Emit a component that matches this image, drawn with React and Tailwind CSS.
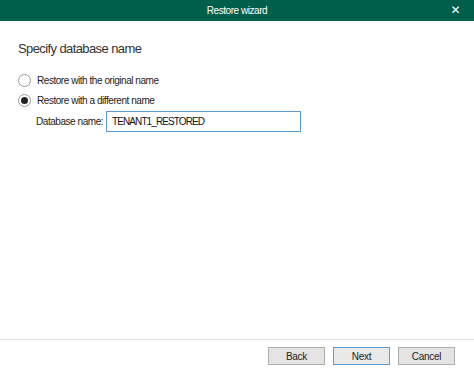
import React from "react";

const font = { fontFamily: '"Liberation Sans", Arial, sans-serif' };

function Radio({ checked, label }) {
  return (
    <label className="flex h-[20px] items-center gap-[6px] whitespace-nowrap text-[10px] tracking-[-0.45px] text-[#222]">
      <span className="flex h-[13px] w-[13px] items-center justify-center rounded-full border border-[#9a9a9a] bg-white">
        {checked ? <span className="h-[7px] w-[7px] rounded-full bg-[#222]" /> : null}
      </span>
      {label}
    </label>
  );
}

function Button({ children, focused }) {
  return (
    <button
      className={
        focused
          ? "h-[18px] w-[57px] border border-[#5b9bd5] bg-[#e9e9e9] text-[10px] tracking-[-0.3px] text-[#222]"
          : "h-[18px] w-[57px] border border-[#adadad] bg-[#e4e4e4] text-[10px] tracking-[-0.3px] text-[#222]"
      }
    >
      {children}
    </button>
  );
}

export default function App() {
  return (
    <div className="flex h-[372px] w-[474px] flex-col bg-white" style={font}>
      <div className="relative flex h-[21px] items-center justify-center bg-[#005f4b] text-[10px] tracking-[-0.45px] text-white">
        Restore wizard
        <span className="absolute right-[14px] top-[2px] text-[12px] font-bold leading-[16px]" style={{ fontFamily: '"DejaVu Sans", sans-serif' }}>✕</span>
      </div>

      <div className="flex-1 px-[18px]">
        <div className="mt-[18px] text-[13px] tracking-[-0.6px] text-[#333]">Specify database name</div>
        <div className="mt-[12px] flex flex-col">
          <Radio label="Restore with the original name" />
          <Radio checked label="Restore with a different name" />
        </div>
        <div className="flex items-center pl-[18px]">
          <span className="w-[70px] whitespace-nowrap text-[10px] tracking-[-0.45px] text-[#222]">Database name:</span>
          <div className="flex h-[21px] w-[195px] items-center border border-[#5b9bd5] px-[5px] text-[10px] tracking-[-0.9px] text-[#111]">
            TENANT1_RESTORED
          </div>
        </div>
      </div>

      <div className="flex h-[33px] items-center justify-end gap-[8px] border-t border-[#e2e2e2] pr-[19px]">
        <Button>Back</Button>
        <Button focused>Next</Button>
        <Button>Cancel</Button>
      </div>
    </div>
  );
}
